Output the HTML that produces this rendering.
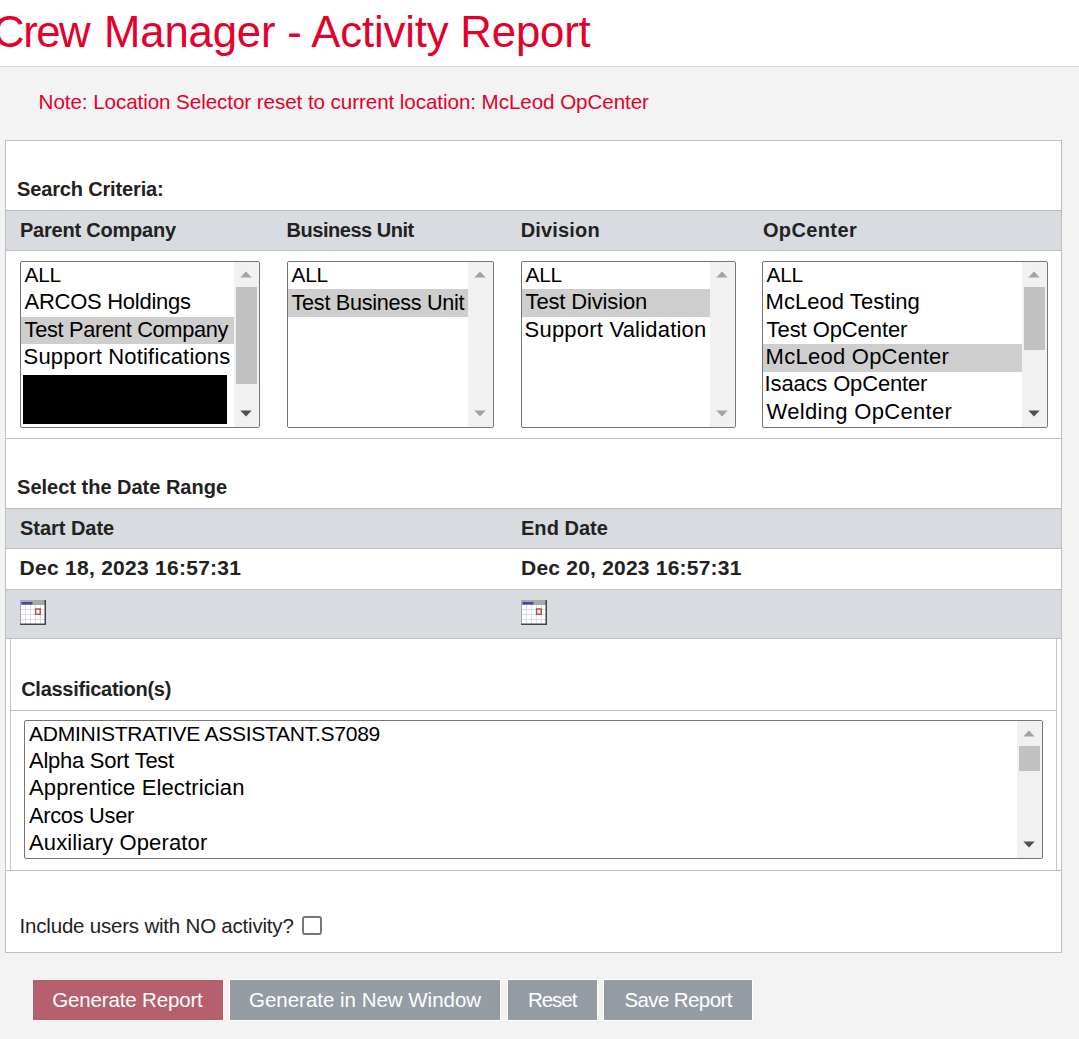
<!DOCTYPE html>
<html><head><meta charset="utf-8"><style>
html,body{margin:0;padding:0}
body{width:1079px;height:1039px;overflow:hidden;position:relative;background:#f3f3f3;font-family:"Liberation Sans",sans-serif}
.hdr{position:absolute;left:0;top:0;width:1079px;height:66px;background:#fff;border-bottom:1px solid #d4d4d4}
.panel{position:absolute;left:5px;top:140px;width:1055px;height:811px;background:#fff;border:1px solid #bfbfbf}
.t{position:absolute;white-space:nowrap;line-height:1}
.ln{position:absolute;height:1px;background:#bdbdbd}
.vln{position:absolute;width:1px;background:#c4c4c4}
.grow{position:absolute;background:#d8dbdf}
.lb{position:absolute;box-sizing:border-box;border:1px solid #767676;border-radius:2px;background:#fff;overflow:hidden}
.lb .t{line-height:1}
.sel{position:absolute;background:#cecece}
.track{position:absolute;top:0;bottom:0;background:#f1f1f1}
.thumb{position:absolute;width:21px;background:#c1c1c1}
.arr{position:absolute;display:block}
.btn{position:absolute;top:979px;height:40px;border:1px solid #fff}
.cb{position:absolute;left:302.3px;top:916.1px;width:15.3px;height:15.3px;border:2px solid #767676;border-radius:3px;background:#fff}
.redact{position:absolute;background:#000}

</style></head><body>
<div class="hdr"></div>
<div class="panel"></div>
<div class="ln" style="left:6px;top:210px;width:1055px"></div>
<div class="grow" style="left:6px;top:211px;width:1055px;height:39px"></div>
<div class="ln" style="left:6px;top:250px;width:1055px"></div>
<div class="ln" style="left:6px;top:438px;width:1055px"></div>
<div class="ln" style="left:6px;top:508px;width:1055px"></div>
<div class="grow" style="left:6px;top:509px;width:1055px;height:39px"></div>
<div class="ln" style="left:6px;top:548px;width:1055px"></div>
<div class="ln" style="left:6px;top:589px;width:1055px"></div>
<div class="grow" style="left:6px;top:590px;width:1055px;height:48px"></div>
<div class="ln" style="left:6px;top:638px;width:1055px"></div>
<div class="vln" style="left:10px;top:639px;height:231px"></div>
<div class="vln" style="left:1056px;top:639px;height:231px"></div>
<div class="ln" style="left:11px;top:710px;width:1045px"></div>
<div class="ln" style="left:6px;top:870px;width:1055px"></div>
<svg style="position:absolute;left:20px;top:600px" width="26" height="25" viewBox="0 0 26 25"><rect x="0" y="0" width="26" height="25" fill="#fff"/><g stroke="#dcdce2" stroke-width="1"><line x1="5.5" y1="4" x2="5.5" y2="24"/><line x1="10.5" y1="4" x2="10.5" y2="24"/><line x1="15.5" y1="4" x2="15.5" y2="24"/><line x1="20.5" y1="4" x2="20.5" y2="24"/><line x1="0" y1="9.5" x2="25" y2="9.5"/><line x1="0" y1="14.5" x2="25" y2="14.5"/><line x1="0" y1="19.5" x2="25" y2="19.5"/></g><rect x="0" y="0" width="25" height="5" fill="#a8a8a8"/><rect x="0" y="0" width="1" height="25" fill="#a8a8a8"/><rect x="1.5" y="2" width="11" height="2.5" fill="#4646a8"/><rect x="15.6" y="9" width="4.6" height="5.2" fill="none" stroke="#b45050" stroke-width="1.5"/><rect x="24.5" y="0" width="1.5" height="25" fill="#404540"/><rect x="0" y="23.5" width="26" height="1.5" fill="#404540"/></svg>
<svg style="position:absolute;left:521px;top:600px" width="26" height="25" viewBox="0 0 26 25"><rect x="0" y="0" width="26" height="25" fill="#fff"/><g stroke="#dcdce2" stroke-width="1"><line x1="5.5" y1="4" x2="5.5" y2="24"/><line x1="10.5" y1="4" x2="10.5" y2="24"/><line x1="15.5" y1="4" x2="15.5" y2="24"/><line x1="20.5" y1="4" x2="20.5" y2="24"/><line x1="0" y1="9.5" x2="25" y2="9.5"/><line x1="0" y1="14.5" x2="25" y2="14.5"/><line x1="0" y1="19.5" x2="25" y2="19.5"/></g><rect x="0" y="0" width="25" height="5" fill="#a8a8a8"/><rect x="0" y="0" width="1" height="25" fill="#a8a8a8"/><rect x="1.5" y="2" width="11" height="2.5" fill="#4646a8"/><rect x="15.6" y="9" width="4.6" height="5.2" fill="none" stroke="#b45050" stroke-width="1.5"/><rect x="24.5" y="0" width="1.5" height="25" fill="#404540"/><rect x="0" y="23.5" width="26" height="1.5" fill="#404540"/></svg>
<div class="cb"></div>
<div class="btn" style="left:32px;width:190px;background:#b6606d"></div>
<div class="btn" style="left:229px;width:270px;background:#959ca4"></div>
<div class="btn" style="left:507px;width:89px;background:#959ca4"></div>
<div class="btn" style="left:603px;width:148px;background:#959ca4"></div>
<div class="redact" style="left:23px;top:375px;width:204px;height:49px;z-index:5"></div>

<div class="t" style="left:-6.90px;top:9.61px;font-size:43.7px;font-weight:400;color:#e4002b;letter-spacing:-1.465px">Crew</div>
<div class="t" style="left:104.00px;top:9.61px;font-size:43.7px;font-weight:400;color:#e4002b;letter-spacing:-0.156px">Manager - Activity Report</div>
<div class="t" style="left:38.60px;top:91.86px;font-size:20.6px;font-weight:400;color:#e4002b;letter-spacing:-0.067px">Note: Location Selector reset to current location: McLeod OpCenter</div>
<div class="t" style="left:17.00px;top:178.87px;font-size:20px;font-weight:700;color:#222;letter-spacing:-0.153px">Search Criteria:</div>
<div class="t" style="left:19.90px;top:219.77px;font-size:20px;font-weight:700;color:#222;letter-spacing:-0.216px">Parent Company</div>
<div class="t" style="left:286.60px;top:219.77px;font-size:20px;font-weight:700;color:#222;letter-spacing:-0.475px">Business Unit</div>
<div class="t" style="left:520.70px;top:219.77px;font-size:20px;font-weight:700;color:#222;letter-spacing:0.161px">Division</div>
<div class="t" style="left:762.90px;top:219.77px;font-size:20px;font-weight:700;color:#222;letter-spacing:0.380px">OpCenter</div>
<div class="t" style="left:17.10px;top:476.87px;font-size:20px;font-weight:700;color:#222;letter-spacing:-0.007px">Select the Date Range</div>
<div class="t" style="left:20.00px;top:518.07px;font-size:20px;font-weight:700;color:#222;letter-spacing:-0.039px">Start Date</div>
<div class="t" style="left:521.00px;top:518.07px;font-size:20px;font-weight:700;color:#222;letter-spacing:0.035px">End Date</div>
<div class="t" style="left:19.60px;top:556.72px;font-size:21px;font-weight:700;color:#222;letter-spacing:0.269px">Dec 18, 2023 16:57:31</div>
<div class="t" style="left:521.00px;top:556.72px;font-size:21px;font-weight:700;color:#222;letter-spacing:0.219px">Dec 20, 2023 16:57:31</div>
<div class="t" style="left:21.20px;top:679.17px;font-size:20px;font-weight:700;color:#222;letter-spacing:-0.270px">Classification(s)</div>
<div class="t" style="left:19.60px;top:915.95px;font-size:20.5px;font-weight:400;color:#222;letter-spacing:-0.202px">Include users with NO activity?</div>
<div class="t" style="left:52.30px;top:989.55px;font-size:20.5px;font-weight:400;color:#fff;letter-spacing:-0.157px">Generate Report</div>
<div class="t" style="left:249.00px;top:989.55px;font-size:20.5px;font-weight:400;color:#fff;letter-spacing:-0.016px">Generate in New Window</div>
<div class="t" style="left:527.90px;top:989.55px;font-size:20.5px;font-weight:400;color:#fff;letter-spacing:-1.014px">Reset</div>
<div class="t" style="left:624.40px;top:989.55px;font-size:20.5px;font-weight:400;color:#fff;letter-spacing:-0.596px">Save Report</div>
<div class="lb" style="left:20px;top:261px;width:240px;height:167px">
<div class="sel" style="left:0;top:54.72px;width:213.00px;height:27.76px"></div>
<div class="t" style="left:3.60px;top:2.84px;font-size:20.86px;color:#000;letter-spacing:-0.300px">ALL</div>
<div class="t" style="left:3.60px;top:29.24px;font-size:22.00px;color:#000;letter-spacing:-0.281px">ARCOS Holdings</div>
<div class="t" style="left:3.60px;top:56.79px;font-size:21.78px;color:#000;letter-spacing:-0.300px">Test Parent Company</div>
<div class="t" style="left:2.60px;top:83.96px;font-size:22.00px;color:#000;letter-spacing:0.185px">Support Notifications</div>
<div class="track" style="left:213.00px;width:25px"></div>
<div class="thumb" style="left:215.00px;top:25px;height:97px"></div>
<svg class="arr" style="left:219.00px;top:9.3px" width="12" height="7" viewBox="0 0 12 7"><polygon points="0.3,6.5 11.7,6.5 6,0.6" fill="#a3a3a3"/></svg>
<svg class="arr" style="left:219.00px;top:148.00px" width="12" height="7" viewBox="0 0 12 7"><polygon points="0.3,0.5 11.7,0.5 6,6.4" fill="#505050"/></svg>
</div>
<div class="lb" style="left:287px;top:261px;width:207px;height:167px">
<div class="sel" style="left:0;top:27.36px;width:180.00px;height:27.76px"></div>
<div class="t" style="left:3.60px;top:2.84px;font-size:20.86px;color:#000;letter-spacing:-0.300px">ALL</div>
<div class="t" style="left:3.60px;top:29.52px;font-size:21.67px;color:#000;letter-spacing:-0.300px">Test Business Unit</div>
<div class="track" style="left:180.00px;width:25px"></div>
<svg class="arr" style="left:186.00px;top:9.3px" width="12" height="7" viewBox="0 0 12 7"><polygon points="0.3,6.5 11.7,6.5 6,0.6" fill="#a3a3a3"/></svg>
<svg class="arr" style="left:186.00px;top:148.00px" width="12" height="7" viewBox="0 0 12 7"><polygon points="0.3,0.5 11.7,0.5 6,6.4" fill="#a3a3a3"/></svg>
</div>
<div class="lb" style="left:521px;top:261px;width:215px;height:167px">
<div class="sel" style="left:0;top:27.36px;width:188.00px;height:27.76px"></div>
<div class="t" style="left:3.60px;top:2.84px;font-size:20.86px;color:#000;letter-spacing:-0.300px">ALL</div>
<div class="t" style="left:3.60px;top:29.24px;font-size:22.00px;color:#000;letter-spacing:-0.154px">Test Division</div>
<div class="t" style="left:2.60px;top:56.60px;font-size:22.00px;color:#000;letter-spacing:0.204px">Support Validation</div>
<div class="track" style="left:188.00px;width:25px"></div>
<svg class="arr" style="left:194.00px;top:9.3px" width="12" height="7" viewBox="0 0 12 7"><polygon points="0.3,6.5 11.7,6.5 6,0.6" fill="#a3a3a3"/></svg>
<svg class="arr" style="left:194.00px;top:148.00px" width="12" height="7" viewBox="0 0 12 7"><polygon points="0.3,0.5 11.7,0.5 6,6.4" fill="#a3a3a3"/></svg>
</div>
<div class="lb" style="left:762px;top:261px;width:286px;height:167px">
<div class="sel" style="left:0;top:82.08px;width:259.00px;height:27.76px"></div>
<div class="t" style="left:3.60px;top:2.84px;font-size:20.86px;color:#000;letter-spacing:-0.300px">ALL</div>
<div class="t" style="left:2.60px;top:29.24px;font-size:22.00px;color:#000;letter-spacing:0.042px">McLeod Testing</div>
<div class="t" style="left:3.60px;top:56.60px;font-size:22.00px;color:#000;letter-spacing:-0.084px">Test OpCenter</div>
<div class="t" style="left:2.60px;top:83.96px;font-size:22.00px;color:#000;letter-spacing:0.255px">McLeod OpCenter</div>
<div class="t" style="left:1.60px;top:111.32px;font-size:22.00px;color:#000;letter-spacing:-0.161px">Isaacs OpCenter</div>
<div class="t" style="left:3.60px;top:138.68px;font-size:22.00px;color:#000;letter-spacing:0.317px">Welding OpCenter</div>
<div class="track" style="left:259.00px;width:25px"></div>
<div class="thumb" style="left:261.00px;top:25px;height:63px"></div>
<svg class="arr" style="left:265.00px;top:9.3px" width="12" height="7" viewBox="0 0 12 7"><polygon points="0.3,6.5 11.7,6.5 6,0.6" fill="#a3a3a3"/></svg>
<svg class="arr" style="left:265.00px;top:148.00px" width="12" height="7" viewBox="0 0 12 7"><polygon points="0.3,0.5 11.7,0.5 6,6.4" fill="#505050"/></svg>
</div>
<div class="lb" style="left:24px;top:720px;width:1019px;height:139px">
<div class="t" style="left:4.00px;top:2.46px;font-size:21.08px;color:#000;letter-spacing:-0.300px">ADMINISTRATIVE ASSISTANT.S7089</div>
<div class="t" style="left:4.00px;top:28.98px;font-size:22.00px;color:#000;letter-spacing:-0.255px">Alpha Sort Test</div>
<div class="t" style="left:4.00px;top:56.28px;font-size:22.00px;color:#000;letter-spacing:0.127px">Apprentice Electrician</div>
<div class="t" style="left:4.00px;top:83.71px;font-size:21.84px;color:#000;letter-spacing:-0.300px">Arcos User</div>
<div class="t" style="left:4.00px;top:110.88px;font-size:22.00px;color:#000;letter-spacing:0.127px">Auxiliary Operator</div>
<div class="track" style="left:992.00px;width:25px"></div>
<div class="thumb" style="left:994.00px;top:25px;height:25px"></div>
<svg class="arr" style="left:998.00px;top:9.3px" width="12" height="7" viewBox="0 0 12 7"><polygon points="0.3,6.5 11.7,6.5 6,0.6" fill="#a3a3a3"/></svg>
<svg class="arr" style="left:998.00px;top:120.00px" width="12" height="7" viewBox="0 0 12 7"><polygon points="0.3,0.5 11.7,0.5 6,6.4" fill="#505050"/></svg>
</div>
</body></html>
